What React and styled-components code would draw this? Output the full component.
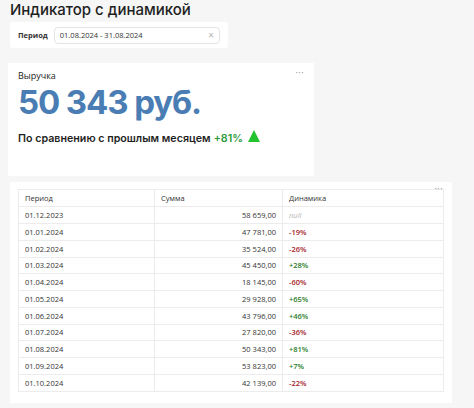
import React from "react";
import styled, { createGlobalStyle } from "styled-components";

const Global = createGlobalStyle`
  body {
    margin: 0;
    background: #f6f6f6;
    font-family: "Open Sans", "Noto Sans", sans-serif;
    color: #222;
  }
`;

const Page = styled.div`
  padding: 0 22px 0 10px;
  width: 442px;
`;

const Title = styled.h1`
  margin: 0;
  height: 22px;
  font-family: Inter, "Noto Sans", sans-serif;
  font-size: 15px;
  font-weight: 500;
  line-height: 19px;
  color: #1f1f1f;
`;

const FilterBox = styled.div`
  display: flex;
  align-items: center;
  gap: 6px;
  width: 218px;
  height: 26px;
  box-sizing: border-box;
  padding: 0 8px;
  background: #fff;
  border-radius: 3px;
`;

const Label = styled.span`
  font-size: 7.5px;
  font-weight: 700;
  color: #333;
`;

const Input = styled.div`
  flex: 1;
  display: flex;
  align-items: center;
  justify-content: space-between;
  height: 17px;
  box-sizing: border-box;
  padding: 0 5px;
  border: 1px solid #e4e4e4;
  border-radius: 4px;
  font-size: 7.5px;
  color: #333;
`;

const Clear = styled.span`
  color: #b5b5b5;
  font-size: 10px;
  line-height: 1;
`;

const Card = styled.div`
  position: relative;
  background: #fff;
  margin-left: ${(p) => p.$left || 0}px;
  margin-top: ${(p) => p.$top}px;
  width: ${(p) => p.$w}px;
  height: ${(p) => p.$h}px;
  box-sizing: border-box;
  padding: ${(p) => p.$pad};
`;

const Dots = styled.span`
  position: absolute;
  top: ${(p) => p.$t}px;
  right: ${(p) => p.$r}px;
  font-size: 9px;
  letter-spacing: 0.5px;
  color: #888;
  line-height: 1;
`;

const KpiLabel = styled.div`
  font-size: 9px;
  color: #222;
  line-height: 12px;
`;

const KpiValue = styled.div`
  font-family: Inter, "Noto Sans", sans-serif;
  font-size: 33px;
  font-weight: 700;
  color: #4a7db3;
  line-height: 40px;
  letter-spacing: -1.1px;
`;

const Compare = styled.div`
  display: flex;
  align-items: center;
  margin-top: 10px;
  font-family: Inter, "Noto Sans", sans-serif;
  font-size: 10.7px;
  font-weight: 600;
  color: #1f1f1f;
  gap: 3px;
`;

const Up = styled.span`
  color: #2c9a3a;
`;

const Tri = styled.svg`
  margin-top: -6px;
  margin-left: 2px;
`;

const Table = styled.table`
  border-collapse: collapse;
  width: 426px;
  font-size: 7.5px;
  color: #333;
`;

const Th = styled.th`
  text-align: left;
  font-weight: 400;
  height: 16.3px;
  padding: 0 6px;
  border: 1px solid #ececec;
`;

const Td = styled.td`
  height: 15.75px;
  padding: 0 6px;
  border: 1px solid #ececec;
  text-align: ${(p) => (p.$right ? "right" : "left")};
  color: ${(p) =>
    p.$tone === "up" ? "#2a7d2a" : p.$tone === "down" ? "#a5262b" : p.$tone === "null" ? "#b9b9b9" : "#333"};
  font-style: ${(p) => (p.$tone === "null" ? "italic" : "normal")};
  font-weight: ${(p) => (p.$tone === "up" || p.$tone === "down" ? 600 : 400)};
`;

const rows = [
  ["01.12.2023", "58 659,00", "null"],
  ["01.01.2024", "47 781,00", "-19%"],
  ["01.02.2024", "35 524,00", "-26%"],
  ["01.03.2024", "45 450,00", "+28%"],
  ["01.04.2024", "18 145,00", "-60%"],
  ["01.05.2024", "29 928,00", "+65%"],
  ["01.06.2024", "43 796,00", "+46%"],
  ["01.07.2024", "27 820,00", "-36%"],
  ["01.08.2024", "50 343,00", "+81%"],
  ["01.09.2024", "53 823,00", "+7%"],
  ["01.10.2024", "42 139,00", "-22%"],
];

const tone = (v) => (v === "null" ? "null" : v.startsWith("+") ? "up" : "down");

export default function App() {
  return (
    <>
      <Global />
      <Page>
        <Title>Индикатор с динамикой</Title>
        <FilterBox>
          <Label>Период</Label>
          <Input>
            <span>01.08.2024 - 31.08.2024</span>
            <Clear>×</Clear>
          </Input>
        </FilterBox>

        <Card $left={-2} $top={15} $w={306} $h={113} $pad="7px 10px">
          <Dots $t={5} $r={10}>···</Dots>
          <KpiLabel>Выручка</KpiLabel>
          <KpiValue>50 343 руб.</KpiValue>
          <Compare>
            По сравнению с прошлым месяцем <Up>+81%</Up>
            <Tri width="12" height="12" viewBox="0 0 12 12">
              <polygon points="6,0 12,12 0,12" fill="#22c32f" />
            </Tri>
          </Compare>
        </Card>

        <Card $top={6} $w={442} $h={221} $pad="7px 8px">
          <Dots $t={2} $r={9}>···</Dots>
          <Table>
            <colgroup>
              <col style={{ width: 136 }} />
              <col style={{ width: 128 }} />
              <col />
            </colgroup>
            <thead>
              <tr>
                <Th>Период</Th>
                <Th>Сумма</Th>
                <Th>Динамика</Th>
              </tr>
            </thead>
            <tbody>
              {rows.map(([d, s, v]) => (
                <tr key={d}>
                  <Td>{d}</Td>
                  <Td $right>{s}</Td>
                  <Td $tone={tone(v)}>{v}</Td>
                </tr>
              ))}
            </tbody>
          </Table>
        </Card>
      </Page>
    </>
  );
}
